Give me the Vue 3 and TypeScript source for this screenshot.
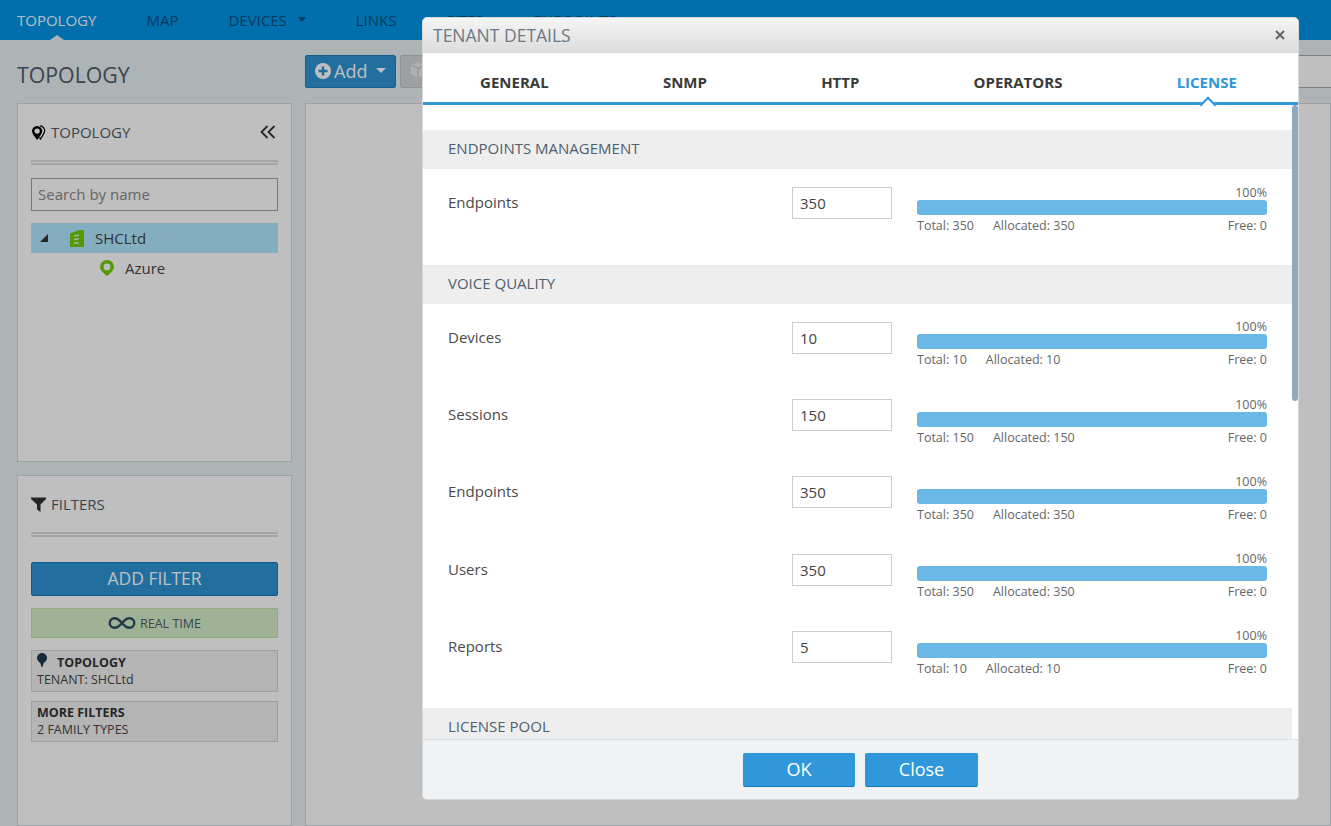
<script setup lang="ts">
interface Row { label: string; value: string; total: number; allocated: number; free: number }

const navItems = [
  { name: 'TOPOLOGY', cls: 'active' },
  { name: 'MAP', cls: '' },
  { name: 'DEVICES', cls: 'caret' },
  { name: 'LINKS', cls: '' },
  { name: 'SITES', cls: '' },
  { name: 'ENDPOINTS', cls: '' },
]
const tabs = ['GENERAL', 'SNMP', 'HTTP', 'OPERATORS', 'LICENSE']
const endpoints: Row[] = [{ label: 'Endpoints', value: '350', total: 350, allocated: 350, free: 0 }]
const voice: Row[] = [
  { label: 'Devices', value: '10', total: 10, allocated: 10, free: 0 },
  { label: 'Sessions', value: '150', total: 150, allocated: 150, free: 0 },
  { label: 'Endpoints', value: '350', total: 350, allocated: 350, free: 0 },
  { label: 'Users', value: '350', total: 350, allocated: 350, free: 0 },
  { label: 'Reports', value: '5', total: 10, allocated: 10, free: 0 },
]
const sections = [
  { title: 'ENDPOINTS MANAGEMENT', rows: endpoints, cls: 'first' },
  { title: 'VOICE QUALITY', rows: voice, cls: '' },
  { title: 'LICENSE POOL', rows: [] as Row[], cls: '' },
]
</script>

<template>
  <div class="app">
    <nav class="nav">
      <a v-for="n in navItems" :key="n.name" class="nav-item" :class="n.cls">{{ n.name }}</a>
    </nav>

    <div class="page">
      <div class="head">
        <h1 class="title">TOPOLOGY</h1>
        <div class="toolbar">
          <button class="btn-add">
            <svg class="plus" viewBox="0 0 16 16" width="16" height="16">
              <circle cx="8" cy="8" r="8" fill="#fff" />
              <path d="M8 3.500v9M3.500 8h9" stroke="#2e95d5" stroke-width="2.600" />
            </svg>
            <span>Add</span>
            <i class="add-caret"></i>
          </button>
          <button class="btn-cube">
            <svg viewBox="0 0 18 18" width="18" height="18">
              <path d="M9 1l7 3v9l-7 4-7-4V4z" fill="#fff" opacity=".55" />
              <path d="M2 4l7 3.400L16 4M9 7.400V17" stroke="#b8bcc0" stroke-width="1" fill="none" />
            </svg>
          </button>
          <div class="toolbox"></div>
        </div>
      </div>

      <div class="columns">
        <aside class="side">
          <section class="panel panel-top">
            <header class="panel-head">
              <svg viewBox="0 0 16 16" width="15" height="15">
                <path d="M9.500 1a5 5 0 0 1 4.600 7c-.8 2-2.600 4.600-4.100 7-.3-.5-.7-1-1-1.600" fill="none" stroke="#000" stroke-width="1.300" />
                <path d="M6.500 1a5.500 5.500 0 0 1 5.500 5.500c0 3-3 6-5.500 9.500C4 12.500 1 9.500 1 6.500A5.500 5.500 0 0 1 6.500 1zm0 2.600a2.900 2.900 0 1 0 0 5.800 2.900 2.900 0 0 0 0-5.800z" fill="#000" fill-rule="evenodd" />
              </svg>
              <span>TOPOLOGY</span>
              <svg class="collapse" viewBox="0 0 16 14" width="16" height="14">
                <path d="M7.500 1L1.500 7l6 6M14.500 1l-6 6 6 6" fill="none" stroke="#333" stroke-width="1.800" />
              </svg>
            </header>
            <div class="rule"></div>
            <input class="search" placeholder="Search by name" />
            <div class="tree-row selected">
              <i class="tree-arrow"></i>
              <svg viewBox="0 0 14 17" width="14" height="17">
                <path d="M0 3.500L9 0h5v17H0z" fill="#70cd08" />
                <path d="M4 6l5-1M4 9.500l5-.7M4 13h5" stroke="#e4f3cf" stroke-width="1.400" />
              </svg>
              <span>SHCLtd</span>
            </div>
            <div class="tree-row child">
              <svg viewBox="0 0 14 16" width="14" height="16">
                <path d="M7 0a7 7 0 0 1 7 7c0 3.500-3.500 6-7 9-3.500-3-7-5.500-7-9a7 7 0 0 1 7-7zm0 3.600a3.400 3.400 0 1 0 0 6.800 3.400 3.400 0 0 0 0-6.800z" fill="#70cd08" fill-rule="evenodd" />
              </svg>
              <span>Azure</span>
            </div>
          </section>

          <section class="panel panel-filters">
            <header class="panel-head">
              <svg viewBox="0 0 15 15" width="15" height="15">
                <path d="M0 .5h15v1.500L9.500 7.500V15L6 12.500V7.500L0 2z" fill="#333" />
              </svg>
              <span>FILTERS</span>
            </header>
            <div class="rule"></div>
            <button class="add-filter">ADD FILTER</button>
            <div class="realtime">
              <svg viewBox="0 0 28 12" width="28" height="12">
                <path d="M14 6C11 2.500 9 1.200 6.500 1.200a4.800 4.800 0 0 0 0 9.600C9 10.800 11 9.500 14 6c3-3.500 5-4.800 7.500-4.800a4.800 4.800 0 0 1 0 9.600C19 10.800 17 9.500 14 6z" fill="none" stroke="#2f4d60" stroke-width="2.400" />
              </svg>
              <span>REAL TIME</span>
            </div>
            <div class="chip">
              <div class="chip-title">
                <svg viewBox="0 0 10 14" width="10" height="14">
                  <path d="M5 0a5 5 0 0 1 5 5c0 2.500-2.200 4-3.500 5.500L5.500 14h-1l-1-3.500C2.200 9 0 7.500 0 5a5 5 0 0 1 5-5z" fill="#1f3a50" />
                </svg>
                <b>TOPOLOGY</b>
              </div>
              <div>TENANT: SHCLtd</div>
            </div>
            <div class="chip">
              <div class="chip-title"><b>MORE FILTERS</b></div>
              <div>2 FAMILY TYPES</div>
            </div>
          </section>
        </aside>
        <main class="main-panel"></main>
      </div>
    </div>

    <div class="overlay"></div>

    <div class="modal">
      <header class="modal-head">
        <span>TENANT DETAILS</span>
        <svg class="close-x" viewBox="0 0 10 10" width="10" height="10">
          <path d="M1 1l8 8M9 1L1 9" stroke="#666" stroke-width="2" />
        </svg>
      </header>
      <div class="tabs">
        <div v-for="t in tabs" :key="t" class="tab" :class="{ on: t === 'LICENSE' }">{{ t }}</div>
      </div>
      <div class="body">
        <div class="scroll-thumb"></div>
        <div class="body-inner">
          <section v-for="s in sections" :key="s.title" class="section" :class="s.cls">
            <h3 class="section-title">{{ s.title }}</h3>
            <div class="rows">
              <div v-for="r in s.rows" :key="r.label" class="row">
                <label class="row-label">{{ r.label }}</label>
                <input class="row-input" :value="r.value" readonly />
                <div class="usage">
                  <div class="pct">100%</div>
                  <div class="bar"></div>
                  <div class="usage-foot">
                    <span class="u-total">Total: {{ r.total }}</span>
                    <span>Allocated: {{ r.allocated }}</span>
                    <span class="u-free">Free: {{ r.free }}</span>
                  </div>
                </div>
              </div>
            </div>
          </section>
        </div>
      </div>
      <footer class="modal-foot">
        <button class="foot-btn ok">OK</button>
        <button class="foot-btn close">Close</button>
      </footer>
    </div>
  </div>
</template>

<style>
html, body { margin: 0; padding: 0; }
</style>

<style scoped>
* { box-sizing: border-box; }
.app {
  position: relative;
  width: 1331px;
  height: 826px;
  overflow: hidden;
  background: #e8eff3;
  font-family: "Open Sans", "Noto Sans", sans-serif;
  font-size: 15px;
  color: #444;
}
.nav {
  height: 40px;
  background: #0294e5;
  display: flex;
  align-items: center;
  padding-left: 17px;
  gap: 50px;
}
.nav-item { color: #034f7e; font-size: 15px; position: relative; }
.nav-item.active { color: #f2fbff; }
.nav-item.active::after {
  content: "";
  position: absolute;
  left: 50%;
  bottom: -10px;
  margin-left: -7px;
  border: 7px solid transparent;
  border-top: 0;
  border-bottom: 5px solid #e8eff3;
}
.nav-item.caret { padding-right: 19px; }
.nav-item.caret::after {
  content: "";
  position: absolute;
  right: 0;
  top: 7px;
  border: 4.500px solid transparent;
  border-bottom: 0;
  border-top: 5px solid #034f7e;
}
.page { padding-left: 17px; }
.head { display: flex; height: 63px; padding-top: 15px; }
.title {
  width: 288px;
  margin: 6px 0 0;
  font-size: 21.300px;
  font-weight: 400;
  line-height: 27px;
  color: #4d5c6c;
}
.toolbar { flex: 1; display: flex; height: 33px; }
.btn-add {
  width: 91px;
  height: 33px;
  background: #2e95d5;
  border: 1px solid #1c7cb8;
  border-radius: 2px;
  color: #fff;
  font: 18px "Open Sans", sans-serif;
  display: flex;
  align-items: center;
  padding: 0 0 2px 9px;
  gap: 3px;
}
.plus { flex: none; }
.add-caret {
  margin-left: 6px;
  border: 5px solid transparent;
  border-bottom: 0;
  border-top: 5px solid #fff;
}
.btn-cube {
  width: 60px;
  height: 33px;
  margin-left: 4px;
  background: #d2d6da;
  border: 1px solid #bfc3c7;
  border-radius: 2px;
  padding: 0 0 0 8px;
  text-align: left;
}
.toolbox {
  flex: 1;
  margin-left: 40px;
  height: 33px;
  background: #fff;
  border-top: 1px solid #aaa;
  border-bottom: 1px solid #aaa;
}
.columns { display: flex; gap: 13px; height: 723px; }
.side { width: 275px; flex: none; display: flex; flex-direction: column; gap: 13px; }
.panel {
  background: #fff;
  border: 1px solid #d4d8db;
  padding: 0 13px;
}
.panel-top { height: 359px; flex: none; }
.panel-filters { flex: 1; }
.panel-head {
  height: 56px;
  display: flex;
  align-items: center;
  gap: 5px;
  color: #4d5c6c;
  font-size: 15px;
}
.collapse { margin-left: auto; margin-right: 2px; }
.rule {
  height: 5px;
  border-top: 2px solid #dcdcdc;
  border-bottom: 2px solid #dcdcdc;
}
.search {
  display: block;
  width: 247px;
  height: 33px;
  margin-top: 13px;
  padding: 0 6px 2px;
  border: 1px solid #a0a0a0;
  background: #fff;
  font: 15px "Open Sans", sans-serif;
  color: #444;
  outline: none;
}
.search::placeholder { color: #888; opacity: 1; }
.tree-row {
  display: flex;
  align-items: center;
  height: 30px;
  gap: 11px;
  color: #444;
}
.tree-row.selected { margin-top: 12px; padding-left: 39px; position: relative; background: #b0e8ff; }
.tree-arrow {
  position: absolute;
  left: 9px;
  top: 11px;
  width: 0;
  height: 0;
  border-left: 8px solid transparent;
  border-bottom: 8px solid #333;
}
.tree-row.child { padding-left: 69px; }
.add-filter {
  display: block;
  width: 247px;
  height: 34px;
  margin-top: 25px;
  background: #2e95d5;
  border: 1px solid #1478b4;
  border-radius: 2px;
  color: #fff;
  font: 17.500px "Open Sans", sans-serif;
  padding: 0 0 2px;
}
.realtime {
  height: 30px;
  margin-top: 12px;
  background: #d6eec9;
  border: 1px solid #bfe6ad;
  display: flex;
  align-items: center;
  justify-content: center;
  gap: 4px;
  font-size: 12.500px;
  color: #4d5c6c;
}
.chip {
  margin-top: 12px;
  height: 42px;
  padding: 3px 5px 0;
  background: #f0f0f0;
  border: 1px solid #d4d4d4;
  font-size: 12.500px;
  line-height: 17px;
  color: #444;
}
.chip + .chip { margin-top: 9px; height: 41px; padding-top: 2px; }
.chip-title { display: flex; gap: 10px; align-items: center; color: #333; }
.chip-title b { font-weight: 700; }
.chip-title svg { margin-top: -5px; }
.main-panel { flex: 1; background: #fff; border: 1px solid #d4d8db; }

.overlay {
  position: absolute;
  inset: 0;
  background: rgba(0, 0, 0, .25);
}
.modal {
  position: absolute;
  left: 422px;
  top: 17px;
  width: 877px;
  height: 783px;
  background: #fff;
  border: 1px solid #d8d8d8;
  border-radius: 5px;
  overflow: hidden;
  display: flex;
  flex-direction: column;
}
.modal-head {
  height: 35px;
  flex: none;
  background: linear-gradient(#f5f5f5, #dcdcdc);
  display: flex;
  align-items: center;
  justify-content: space-between;
  padding: 0 13px 1px 10px;
  font-size: 17.500px;
  color: #6b7885;
}
.tabs {
  height: 52px;
  flex: none;
  display: flex;
  justify-content: space-around;
  align-items: flex-start;
  padding-right: 4px;
  border-bottom: 3px solid #3097da;
  position: relative;
}
.tab {
  margin-top: 19px;
  font-size: 15px;
  line-height: 20px;
  font-weight: 700;
  color: #3a3a3a;
  position: relative;
}
.tab.on { color: #3097da; }
.tab.on::after {
  content: "";
  position: absolute;
  left: 50%;
  top: 26.500px;
  width: 10px;
  height: 10px;
  margin-left: -5px;
  background: #fff;
  border-top: 2px solid #3097da;
  border-left: 2px solid #3097da;
  transform: rotate(45deg);
}
.body { flex: 1; position: relative; overflow: hidden; min-height: 0; }
.body-inner { width: 869px; padding-top: 25px; }
.scroll-thumb {
  position: absolute;
  right: 0;
  top: 0;
  width: 6px;
  height: 296px;
  background: #8fa9bf;
  border-radius: 3px;
}
.section.first { padding-bottom: .6px; }
.section-title {
  margin: 0;
  height: 38.700px;
  padding-left: 25px;
  background: #eee;
  font-size: 15px;
  font-weight: 400;
  line-height: 37.500px;
  color: #4f5f6e;
}
.rows { padding-top: 18.300px; }
.row {
  display: flex;
  height: 77.250px;
  padding-left: 25px;
}
.row-label { width: 344px; margin-top: 5px; line-height: 21px; font-size: 15px; color: #4a4a4a; }
.row-input {
  width: 100px;
  height: 32px;
  border: 1px solid #ccc;
  padding: 0 7px;
  font: 15px "Open Sans", sans-serif;
  color: #444;
  outline: none;
}
.usage { width: 350px; margin: -.4px 0 0 25px; font-size: 12.500px; color: #666; }
.pct { text-align: right; line-height: 12px; height: 13px; }
.bar { height: 15px; background: #69b8e6; border-radius: 3px; }
.usage-foot { display: flex; margin-top: 3px; line-height: 15px; }
.u-total { margin-right: 19px; }
.u-free { margin-left: auto; }
.modal-foot {
  height: 60px;
  flex: none;
  background: #f0f3f6;
  border-top: 1px solid #dde0e3;
  display: flex;
  justify-content: center;
  align-items: flex-start;
  gap: 10px;
  padding-top: 13px;
}
.foot-btn {
  height: 34px;
  background: #3097da;
  border: 1px solid #3097da;
  border-bottom-color: #1478b4;
  border-radius: 2px;
  color: #fff;
  font: 18px "Open Sans", sans-serif;
  padding: 0 0 2px;
}
.foot-btn.ok { width: 112px; }
.foot-btn.close { width: 113px; }
</style>
